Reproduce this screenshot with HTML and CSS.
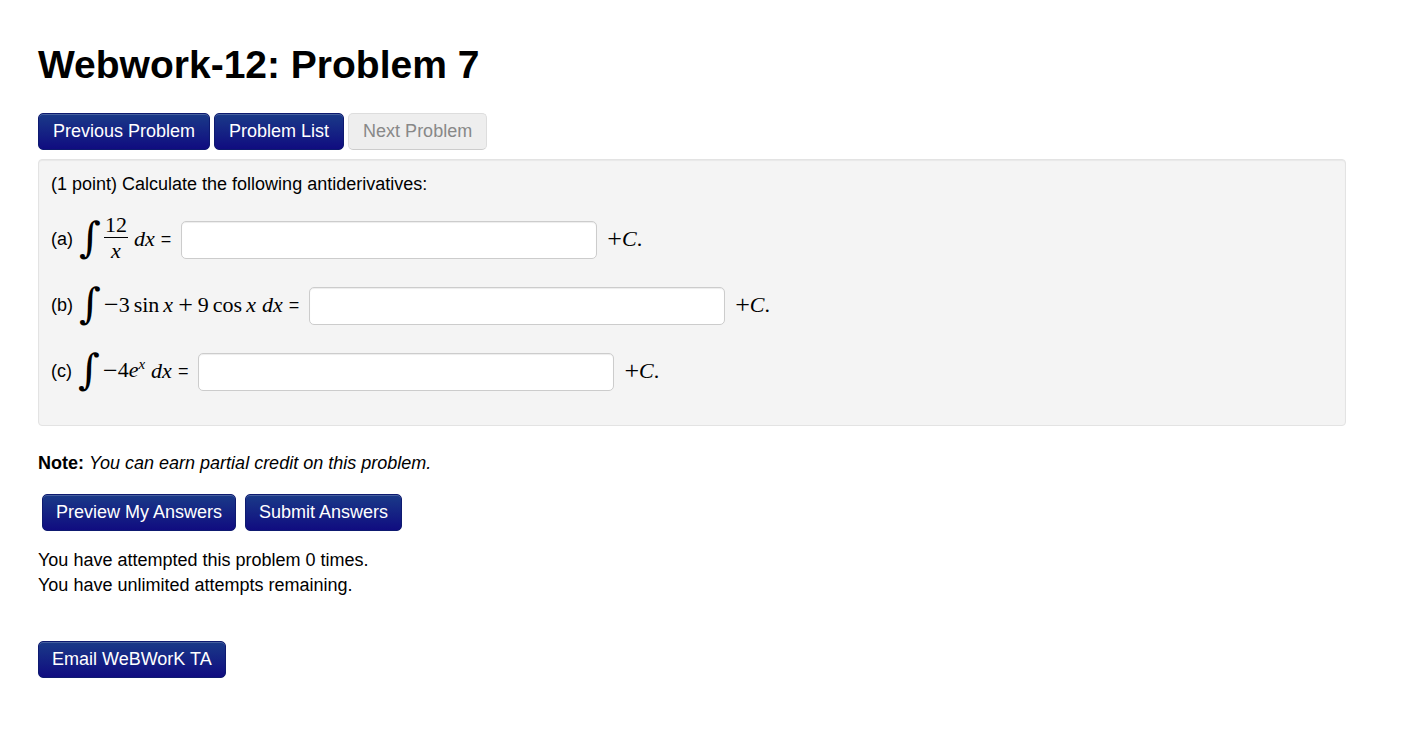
FILE: index.html
```html
<!DOCTYPE html>
<html lang="en">
<head>
  <meta charset="UTF-8" />
  <meta name="viewport" content="width=device-width, initial-scale=1" />
  <title>Webwork-12: Problem 7</title>
  <link rel="stylesheet" href="styles.css">
</head>
<body>

  <h1>Webwork-12: Problem 7</h1>

  <nav class="problem-nav">
    <a class="btn" href="#previous">Previous Problem</a>
    <a class="btn" href="#list">Problem List</a>
    <button type="button" class="btn btn-next" disabled>Next Problem</button>
  </nav>

  <form id="problemForm">
    <div class="problem">
      <p class="question">(1 point) Calculate the following antiderivatives:</p>

      <div class="part">
        <label for="answerA">
          <span class="letter">(a)</span>
          <span class="math"><span class="int">∫</span><span class="frac"><span class="num">12</span><i class="den">x</i></span><span class="dx"><i>dx</i></span></span>
          <span>=</span>
        </label>
        <input type="text" id="answerA" />
        <span class="math"><span class="sign">+</span><i>C</i>.</span>
      </div>

      <div class="part">
        <label for="answerB">
          <span class="letter">(b)</span>
          <span class="math"><span class="int">∫</span><span class="sign">−</span><span>3</span><span class="fn">sin</span><i class="fn">x</i><span class="sign op">+</span><span>9</span><span class="fn">cos</span><i class="fn">x</i><span class="dx"><i>dx</i></span></span>
          <span>=</span>
        </label>
        <input type="text" id="answerB" />
        <span class="math"><span class="sign">+</span><i>C</i>.</span>
      </div>

      <div class="part">
        <label for="answerC">
          <span class="letter">(c)</span>
          <span class="math"><span class="int">∫</span><span class="sign">−</span><span>4<i>e</i><sup><i>x</i></sup></span><span class="dx"><i>dx</i></span></span>
          <span>=</span>
        </label>
        <input type="text" id="answerC" />
        <span class="math"><span class="sign">+</span><i>C</i>.</span>
      </div>
    </div>

    <p class="note"><b>Note:</b> <i>You can earn partial credit on this problem.</i></p>

    <div class="actions">
      <button type="submit" class="btn">Preview My Answers</button>
      <button type="submit" class="btn">Submit Answers</button>
    </div>
  </form>

  <p class="attempts">You have attempted this problem 0 times.<br>You have unlimited attempts remaining.</p>

  <button type="button" class="btn">Email WeBWorK TA</button>

</body>
</html>
```
FILE: styles.css
```css
* {
  margin: 0; padding: 0; box-sizing: border-box;
}

body {
  background: #ffffff;
  color: #000000;
  font-family: "Liberation Sans", Arial, sans-serif;
  font-size: 18px;
  line-height: 25px;
  padding: 40px 70px 40px 38px;
}

h1 {
  font-size: 39px;
  line-height: 50px;
  margin-bottom: 23px;
}

.problem-nav {
  display: flex;
  gap: 4px;
  margin-bottom: 9px;
}

.btn {
  display: inline-block;
  padding: 5px 13px;
  border: 1px solid #0e1a70;
  border-radius: 5px;
  background: linear-gradient(#1a3a88, #100c80);
  box-shadow: inset 0 1px 0 rgba(255, 255, 255, 0.2);
  color: #ffffff;
  font-family: inherit;
  font-size: 18px;
  line-height: 25px;
  text-decoration: none;
  cursor: pointer;
}

.problem-nav .btn {
  padding: 5px 14px;
}

.btn-next {
  border-color: #dddddd #dddddd #cccccc;
  background: #eeeeee;
  box-shadow: none;
  color: #888888;
  cursor: default;
}

.problem {
  padding: 12px 12px 21px;
  border: 1px solid #e3e3e3;
  border-radius: 4px;
  background: #f4f4f4;
  box-shadow: inset 0 1px 1px rgba(0, 0, 0, 0.05);
}

.question {
  margin-bottom: 9px;
}

.part {
  display: flex;
  align-items: center;
  height: 66px;
}

.part label {
  display: flex;
  align-items: center;
  gap: 6px;
}

.part input {
  width: 416px;
  height: 38px;
  margin: 2px 10px 0;
  padding: 5px 8px;
  border: 1px solid #cccccc;
  border-radius: 5px;
  background: #ffffff;
  box-shadow: inset 0 1px 1px rgba(0, 0, 0, 0.075);
  font: inherit;
}

/* formulas */
.math {
  display: flex;
  align-items: center;
  padding-bottom: 2px;
  font-family: "Liberation Serif", "Times New Roman", serif;
  font-size: 22px;
  line-height: 25px;
}

.int {
  width: 25px;
  font-family: "DejaVu Serif", serif;
  font-size: 42px;
  font-style: italic;
  line-height: 48px;
}

.frac {
  display: flex;
  flex-direction: column;
  align-items: center;
}

.num {
  padding: 0 1px;
  border-bottom: 1px solid #000000;
}

.den {
  padding-bottom: 2px;
}

.dx {
  margin-left: 6px;
}

.fn {
  margin-left: 4px;
}

.sign {
  font-size: 26px;
}

.op {
  margin: 0 5px;
}

.math sup {
  font-size: 15px;
  line-height: 1;
}

.note {
  margin: 25px 0 18px;
}

.actions {
  display: flex;
  gap: 9px;
  padding-left: 4px;
}

.attempts {
  margin: 17px 0 43px;
}
```
